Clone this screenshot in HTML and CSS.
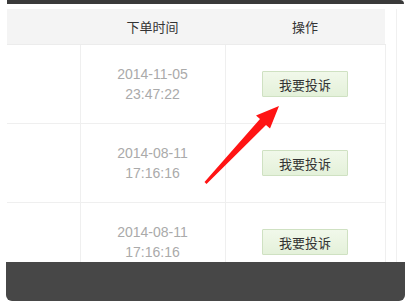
FILE: index.html
```html
<!DOCTYPE html>
<html lang="zh-CN">
<head>
    <meta charset="UTF-8">
    <meta name="viewport" content="width=device-width, initial-scale=1.0">
    <title>我的订单</title>
    <link rel="stylesheet" href="styles.css">
</head>
<body>
    <div class="screen">
        <div class="top-bar"></div>
        <div class="scroll">
            <table class="orders">
                <colgroup>
                    <col class="col-info">
                    <col class="col-time">
                    <col class="col-op">
                </colgroup>
                <thead>
                    <tr>
                        <th></th>
                        <th>下单时间</th>
                        <th>操作</th>
                    </tr>
                </thead>
                <tbody>
                    <tr>
                        <td></td>
                        <td class="time">2014-11-05<br>23:47:22</td>
                        <td><button class="btn">我要投诉</button></td>
                    </tr>
                    <tr>
                        <td></td>
                        <td class="time">2014-08-11<br>17:16:16</td>
                        <td><button class="btn">我要投诉</button></td>
                    </tr>
                    <tr>
                        <td></td>
                        <td class="time">2014-08-11<br>17:16:16</td>
                        <td><button class="btn">我要投诉</button></td>
                    </tr>
                </tbody>
            </table>
        </div>

        <!-- 标注箭头 -->
        <svg class="arrow" width="414" height="307" viewBox="0 0 414 307">
            <polygon fill="#ff1414" points="279,106 270,128.5 266,125 206.5,184 204.5,182 260,119 256,115.5"/>
        </svg>

        <div class="bottom-bar"></div>
    </div>
</body>
</html>
```

FILE: styles.css
```css
body {
    margin: 0;
    background: #fff;
    font-family: "Liberation Sans", "Noto Sans CJK SC", sans-serif;
    color: #333;
}

.screen {
    position: relative;
    width: 414px;
    height: 307px;
    overflow: hidden;
}

.top-bar {
    margin-left: 7px;
    width: 397px;
    height: 4px;
    background: #3a3a3a;
    border-radius: 0 0 0 0;
    border-top-right-radius: 4px;
}

.scroll {
    margin: 5px 0 0 7px;
    width: 389px;
    height: 253px;
    border-right: 1px solid #f0f0f0;
    overflow: hidden;
}

.orders {
    width: 378px;
    border-collapse: collapse;
    table-layout: fixed;
}

.col-info {
    width: 73px;
}

.col-time {
    width: 145px;
}

.col-op {
    width: 160px;
}

.orders th {
    height: 35px;
    padding: 0;
    background: #f4f4f4;
    font-size: 13px;
    font-weight: normal;
    color: #333;
    border-bottom: 1px solid #ececec;
}

.orders td {
    height: 78px;
    padding: 0;
    text-align: center;
    vertical-align: middle;
    border: 1px solid #efefef;
    border-top: none;
}

.orders td:first-child {
    border-left: none;
}

.orders td.time {
    font-size: 14px;
    line-height: 20px;
    color: #aaa;
}

.btn {
    width: 86px;
    height: 26px;
    padding: 0;
    font-family: inherit;
    font-size: 13px;
    color: #333;
    background: linear-gradient(#f1f8ea, #e4f1da);
    border: 1px solid #cfe1c2;
    border-radius: 1px;
}

.arrow {
    position: absolute;
    left: 0;
    top: 0;
    pointer-events: none;
}

.bottom-bar {
    position: absolute;
    left: 6px;
    top: 262px;
    width: 399px;
    height: 39px;
    background: #474747;
    border-radius: 0 0 6px 6px;
}
```
